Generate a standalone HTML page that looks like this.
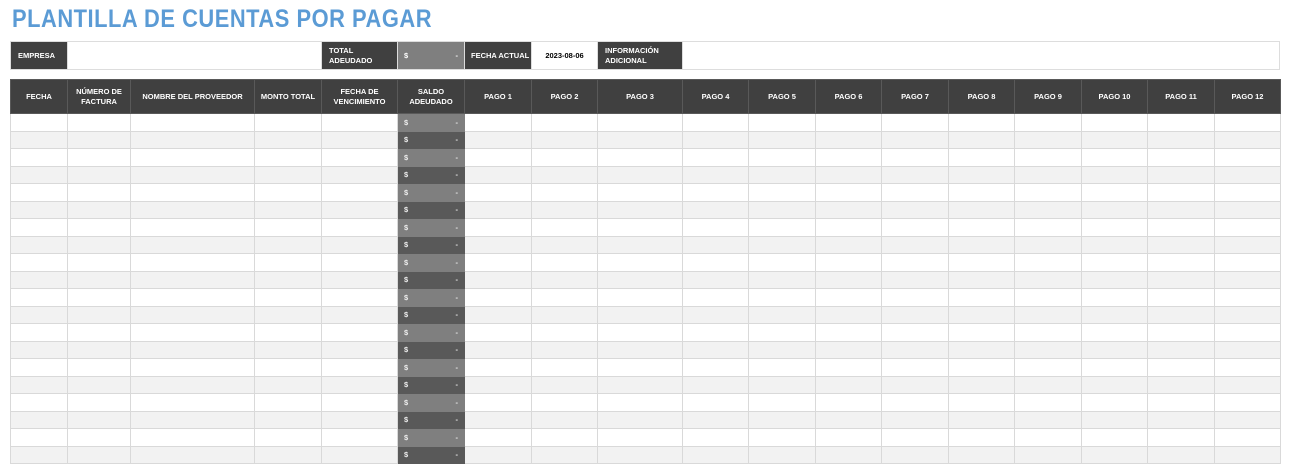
<!DOCTYPE html>
<html><head><meta charset="utf-8"><style>
body{margin:0;background:#fff;width:1300px;height:476px;overflow:hidden;font-family:"Liberation Sans",sans-serif;}
.t{position:absolute;left:12px;top:5px;font-size:25px;font-weight:bold;color:#5b9bd5;letter-spacing:0.6px;transform:scaleX(0.875);transform-origin:left;}
table{position:absolute;left:10px;border-collapse:collapse;table-layout:fixed;}
td{padding:0;font-size:7.5px;font-weight:bold;color:#fff;white-space:nowrap;}
#info{top:41px;width:1270px;}
#info td{height:27px;border:1px solid #ddd;}
.d{background:#404040;padding-left:7px;line-height:10px;}
.g{background:#7f7f7f;padding:0 6px;}
.w{background:#fff;color:#000;text-align:center;}
#m{top:79px;width:1270px;}
#m th{background:#404040;color:#fff;font-size:7.5px;font-weight:bold;height:33px;border:1px solid #595959;line-height:10px;padding:0;}
#m td{border:1px solid #d9d9d9;height:16.5px;}
#m tr:nth-child(odd) td{background:#f2f2f2;}
#m td.s{background:#7f7f7f;border-color:#7f7f7f;color:#eee;padding:0 6px;}
#m tr:nth-child(odd) td.s{background:#595959;border-color:#595959;}
.s span,.g span{float:right;}
</style></head><body>
<div class="t">PLANTILLA DE CUENTAS POR PAGAR</div>
<table id="info"><colgroup><col style="width:57px"><col style="width:254px"><col style="width:76px"><col style="width:67px"><col style="width:67px"><col style="width:66px"><col style="width:85px"><col></colgroup>
<tr><td class="d">EMPRESA</td><td class="w"></td><td class="d">TOTAL<br>ADEUDADO</td><td class="g">$<span>-</span></td><td class="d" style="padding-left:6px">FECHA ACTUAL</td><td class="w">2023-08-06</td><td class="d">INFORMACIÓN<br>ADICIONAL</td><td class="w"></td></tr></table>
<table id="m"><colgroup><col style="width:57px"><col style="width:63px"><col style="width:124px"><col style="width:67px"><col style="width:76px"><col style="width:67px"><col style="width:67px"><col style="width:66px"><col style="width:85px"><col style="width:66px"><col style="width:67px"><col style="width:66px"><col style="width:67px"><col style="width:66px"><col style="width:67px"><col style="width:66px"><col style="width:67px"><col style="width:66px"></colgroup>
<tr><th>FECHA</th><th>NÚMERO DE<br>FACTURA</th><th>NOMBRE DEL PROVEEDOR</th><th>MONTO TOTAL</th><th>FECHA DE<br>VENCIMIENTO</th><th>SALDO<br>ADEUDADO</th><th>PAGO 1</th><th>PAGO 2</th><th>PAGO 3</th><th>PAGO 4</th><th>PAGO 5</th><th>PAGO 6</th><th>PAGO 7</th><th>PAGO 8</th><th>PAGO 9</th><th>PAGO 10</th><th>PAGO 11</th><th>PAGO 12</th></tr>
<tr><td></td><td></td><td></td><td></td><td></td><td class="s">$<span>-</span></td><td></td><td></td><td></td><td></td><td></td><td></td><td></td><td></td><td></td><td></td><td></td><td></td></tr>
<tr><td></td><td></td><td></td><td></td><td></td><td class="s">$<span>-</span></td><td></td><td></td><td></td><td></td><td></td><td></td><td></td><td></td><td></td><td></td><td></td><td></td></tr>
<tr><td></td><td></td><td></td><td></td><td></td><td class="s">$<span>-</span></td><td></td><td></td><td></td><td></td><td></td><td></td><td></td><td></td><td></td><td></td><td></td><td></td></tr>
<tr><td></td><td></td><td></td><td></td><td></td><td class="s">$<span>-</span></td><td></td><td></td><td></td><td></td><td></td><td></td><td></td><td></td><td></td><td></td><td></td><td></td></tr>
<tr><td></td><td></td><td></td><td></td><td></td><td class="s">$<span>-</span></td><td></td><td></td><td></td><td></td><td></td><td></td><td></td><td></td><td></td><td></td><td></td><td></td></tr>
<tr><td></td><td></td><td></td><td></td><td></td><td class="s">$<span>-</span></td><td></td><td></td><td></td><td></td><td></td><td></td><td></td><td></td><td></td><td></td><td></td><td></td></tr>
<tr><td></td><td></td><td></td><td></td><td></td><td class="s">$<span>-</span></td><td></td><td></td><td></td><td></td><td></td><td></td><td></td><td></td><td></td><td></td><td></td><td></td></tr>
<tr><td></td><td></td><td></td><td></td><td></td><td class="s">$<span>-</span></td><td></td><td></td><td></td><td></td><td></td><td></td><td></td><td></td><td></td><td></td><td></td><td></td></tr>
<tr><td></td><td></td><td></td><td></td><td></td><td class="s">$<span>-</span></td><td></td><td></td><td></td><td></td><td></td><td></td><td></td><td></td><td></td><td></td><td></td><td></td></tr>
<tr><td></td><td></td><td></td><td></td><td></td><td class="s">$<span>-</span></td><td></td><td></td><td></td><td></td><td></td><td></td><td></td><td></td><td></td><td></td><td></td><td></td></tr>
<tr><td></td><td></td><td></td><td></td><td></td><td class="s">$<span>-</span></td><td></td><td></td><td></td><td></td><td></td><td></td><td></td><td></td><td></td><td></td><td></td><td></td></tr>
<tr><td></td><td></td><td></td><td></td><td></td><td class="s">$<span>-</span></td><td></td><td></td><td></td><td></td><td></td><td></td><td></td><td></td><td></td><td></td><td></td><td></td></tr>
<tr><td></td><td></td><td></td><td></td><td></td><td class="s">$<span>-</span></td><td></td><td></td><td></td><td></td><td></td><td></td><td></td><td></td><td></td><td></td><td></td><td></td></tr>
<tr><td></td><td></td><td></td><td></td><td></td><td class="s">$<span>-</span></td><td></td><td></td><td></td><td></td><td></td><td></td><td></td><td></td><td></td><td></td><td></td><td></td></tr>
<tr><td></td><td></td><td></td><td></td><td></td><td class="s">$<span>-</span></td><td></td><td></td><td></td><td></td><td></td><td></td><td></td><td></td><td></td><td></td><td></td><td></td></tr>
<tr><td></td><td></td><td></td><td></td><td></td><td class="s">$<span>-</span></td><td></td><td></td><td></td><td></td><td></td><td></td><td></td><td></td><td></td><td></td><td></td><td></td></tr>
<tr><td></td><td></td><td></td><td></td><td></td><td class="s">$<span>-</span></td><td></td><td></td><td></td><td></td><td></td><td></td><td></td><td></td><td></td><td></td><td></td><td></td></tr>
<tr><td></td><td></td><td></td><td></td><td></td><td class="s">$<span>-</span></td><td></td><td></td><td></td><td></td><td></td><td></td><td></td><td></td><td></td><td></td><td></td><td></td></tr>
<tr><td></td><td></td><td></td><td></td><td></td><td class="s">$<span>-</span></td><td></td><td></td><td></td><td></td><td></td><td></td><td></td><td></td><td></td><td></td><td></td><td></td></tr>
<tr><td></td><td></td><td></td><td></td><td></td><td class="s">$<span>-</span></td><td></td><td></td><td></td><td></td><td></td><td></td><td></td><td></td><td></td><td></td><td></td><td></td></tr>
</table>
</body></html>
